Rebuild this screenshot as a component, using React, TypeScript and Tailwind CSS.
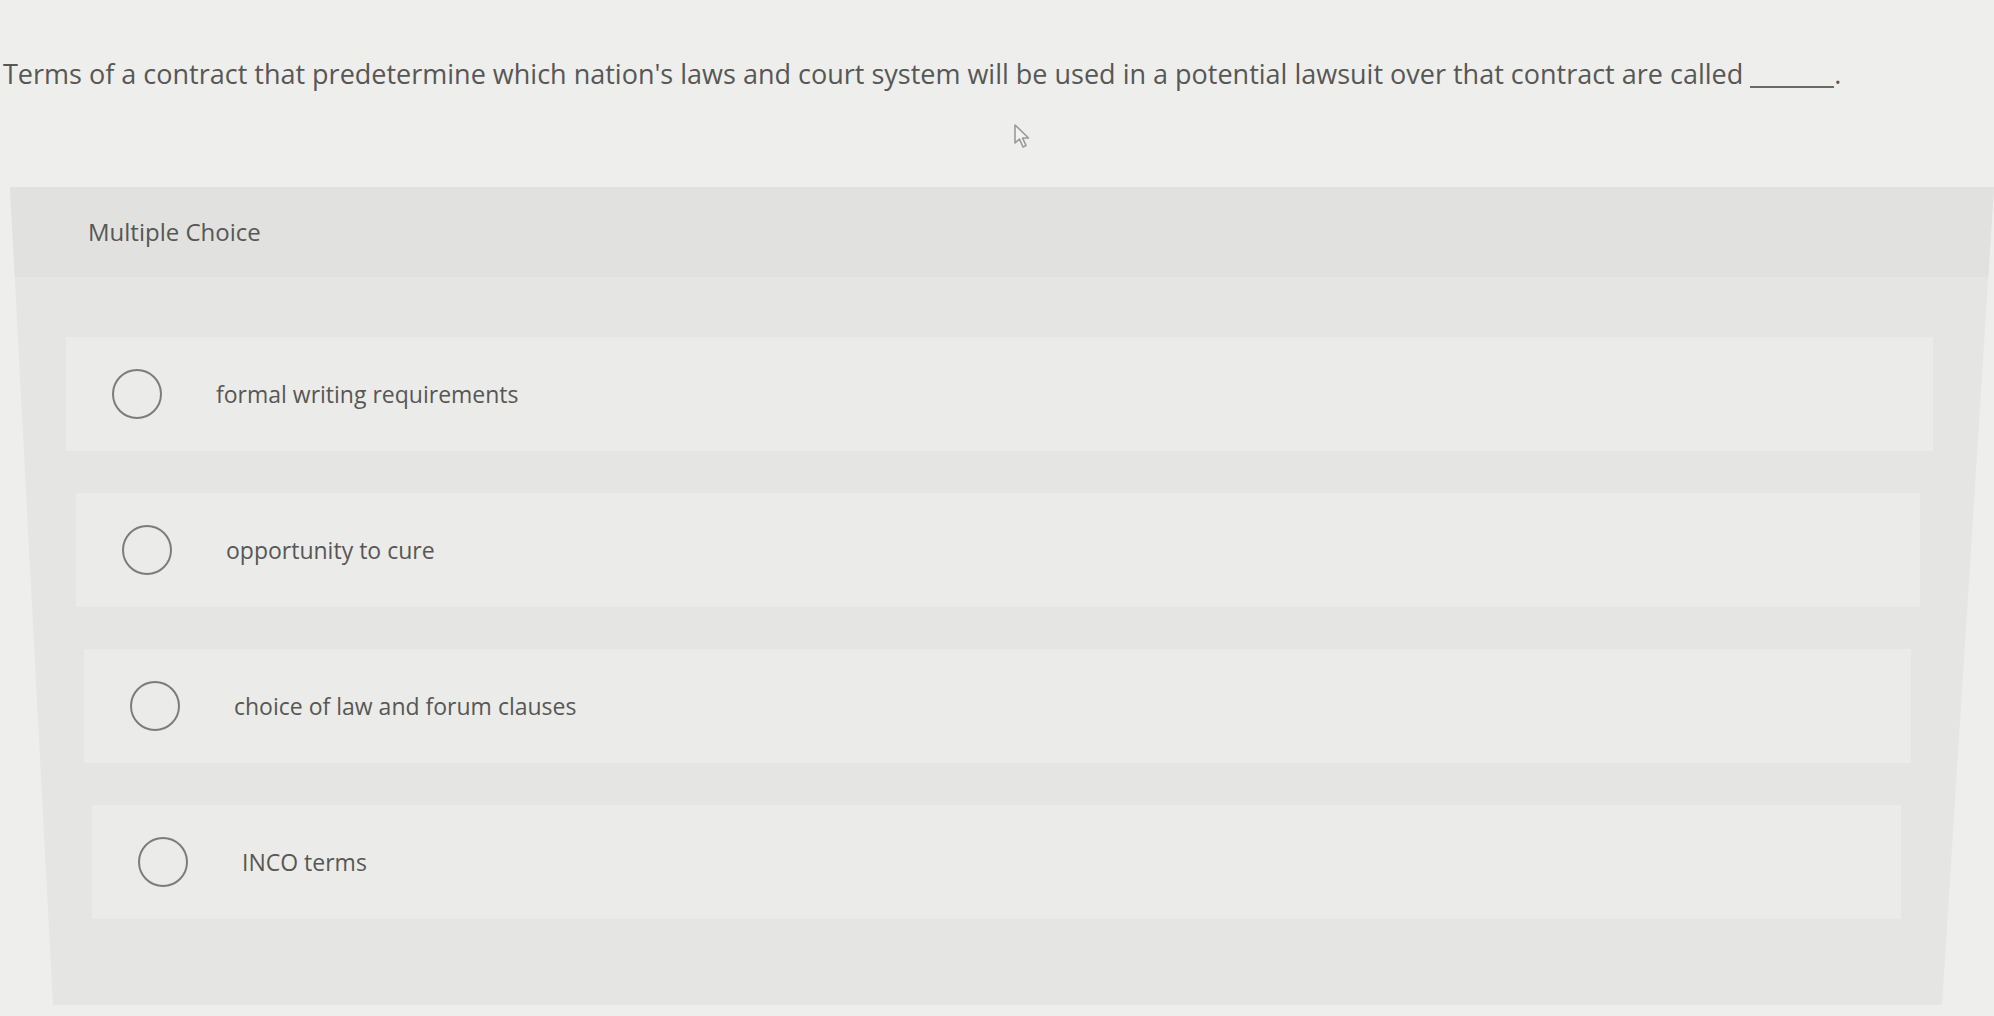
import React from "react";

/**
 * Multiple choice question card — single question with four radio options.
 */

interface Choice {
  label: string;
  row: string; // margin classes per row (page is shot at a slight angle)
}

const choices: Choice[] = [
  { label: "formal writing requirements", row: "ml-[56px] mr-[61px]" },
  { label: "opportunity to cure", row: "ml-[66px] mr-[74px]" },
  { label: "choice of law and forum clauses", row: "ml-[74px] mr-[83px]" },
  { label: "INCO terms", row: "ml-[82px] mr-[93px]" },
];

function Cursor() {
  return (
    <svg width="20" height="28" viewBox="0 0 20 28" className="absolute left-[1013px] top-[123px]">
      <path
        d="M2 2 L2 20 L6.5 16 L10 24 L13 22.6 L9.6 15 L15.5 15 Z"
        fill="#f2f2f0"
        stroke="#9a9a98"
        strokeWidth="1.6"
        strokeLinejoin="round"
      />
    </svg>
  );
}

function ChoiceRow({ choice }: { choice: Choice }) {
  return (
    <label className={`flex h-[114px] items-center bg-[#ebebe9] pl-[46px] ${choice.row}`}>
      <span className="h-[50px] w-[50px] shrink-0 rounded-full border-2 border-[#7c7c7a]" />
      <span className="ml-[54px] text-[23px] text-[#575755]">{choice.label}</span>
    </label>
  );
}

export default function App() {
  return (
    <div
      className="relative h-[1016px] w-[1994px] overflow-hidden bg-[#eeeeec]"
      style={{ fontFamily: "'Open Sans', Lato, sans-serif" }}
    >
      {/* Question stem */}
      <p className="pl-[3px] pt-[57px] text-[27px] leading-[34px] text-[#575755]">
        Terms of a contract that predetermine which nation's laws and court system will be used in a
        potential lawsuit over that contract are called{" "}
        <span className="inline-block w-[84px] border-b-2 border-[#6a6a68] align-[-4px]" />.
      </p>

      <Cursor />

      {/* Answer panel */}
      <section className="ml-[10px] mt-[96px] h-[818px] bg-[#e5e5e3] [clip-path:polygon(0_0,100%_0,calc(100%-52px)_100%,43px_100%)]">
        <div className="flex h-[90px] items-center bg-[#e1e1df] pl-[78px]">
          <span className="text-[24px] text-[#575755]">Multiple Choice</span>
        </div>

        <div className="flex flex-col gap-[42px] pt-[60px]">
          {choices.map((c) => (
            <ChoiceRow key={c.label} choice={c} />
          ))}
        </div>
      </section>
    </div>
  );
}
